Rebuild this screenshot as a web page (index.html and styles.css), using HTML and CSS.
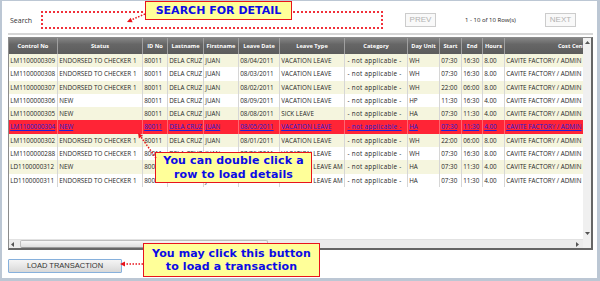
FILE: index.html
```html
<!DOCTYPE html>
<html>
<head>
<meta charset="utf-8">
<link rel="stylesheet" href="styles.css">
</head>
<body>
<div class="frame">
  <div class="toolbar">
    <span class="search-label">Search</span>
    <div class="search-box"></div>
    <button class="pager-btn prev">PREV</button>
    <span class="pager-info">1 - 10 of 10 Row(s)</span>
    <button class="pager-btn next">NEXT</button>
  </div>
  <div class="separator"></div>
  <div class="grid">
    <div class="grid-main">
      <div class="viewport">
        <div class="row head">
          <div class="cell">Control No</div><div class="cell">Status</div><div class="cell">ID No</div><div class="cell">Lastname</div><div class="cell">Firstname</div><div class="cell">Leave Date</div><div class="cell">Leave Type</div><div class="cell">Category</div><div class="cell">Day Unit</div><div class="cell">Start</div><div class="cell">End</div><div class="cell">Hours</div><div class="cell">Cost Center</div>
        </div>
        <div class="row odd">
          <div class="cell">LM1100000309</div><div class="cell">ENDORSED TO CHECKER 1</div><div class="cell">80011</div><div class="cell">DELA CRUZ</div><div class="cell">JUAN</div><div class="cell">08/04/2011</div><div class="cell">VACATION LEAVE</div><div class="cell cat">- not applicable -</div><div class="cell">WH</div><div class="cell">07:30</div><div class="cell">16:30</div><div class="cell">8.00</div><div class="cell">CAVITE FACTORY / ADMIN</div>
        </div>
        <div class="row">
          <div class="cell">LM1100000308</div><div class="cell">ENDORSED TO CHECKER 1</div><div class="cell">80011</div><div class="cell">DELA CRUZ</div><div class="cell">JUAN</div><div class="cell">08/03/2011</div><div class="cell">VACATION LEAVE</div><div class="cell cat">- not applicable -</div><div class="cell">WH</div><div class="cell">07:30</div><div class="cell">16:30</div><div class="cell">8.00</div><div class="cell">CAVITE FACTORY / ADMIN</div>
        </div>
        <div class="row odd">
          <div class="cell">LM1100000307</div><div class="cell">ENDORSED TO CHECKER 1</div><div class="cell">80011</div><div class="cell">DELA CRUZ</div><div class="cell">JUAN</div><div class="cell">08/02/2011</div><div class="cell">VACATION LEAVE</div><div class="cell cat">- not applicable -</div><div class="cell">WH</div><div class="cell">22:00</div><div class="cell">06:00</div><div class="cell">8.00</div><div class="cell">CAVITE FACTORY / ADMIN</div>
        </div>
        <div class="row">
          <div class="cell">LM1100000306</div><div class="cell">NEW</div><div class="cell">80011</div><div class="cell">DELA CRUZ</div><div class="cell">JUAN</div><div class="cell">08/09/2011</div><div class="cell">VACATION LEAVE</div><div class="cell cat">- not applicable -</div><div class="cell">HP</div><div class="cell">11:30</div><div class="cell">16:30</div><div class="cell">4.00</div><div class="cell">CAVITE FACTORY / ADMIN</div>
        </div>
        <div class="row odd">
          <div class="cell">LM1100000305</div><div class="cell">NEW</div><div class="cell">80011</div><div class="cell">DELA CRUZ</div><div class="cell">JUAN</div><div class="cell">08/08/2011</div><div class="cell">SICK LEAVE</div><div class="cell cat">- not applicable -</div><div class="cell">HA</div><div class="cell">07:30</div><div class="cell">11:30</div><div class="cell">4.00</div><div class="cell">CAVITE FACTORY / ADMIN</div>
        </div>
        <div class="row selected">
          <div class="cell">LM1100000304</div><div class="cell">NEW</div><div class="cell">80011</div><div class="cell">DELA CRUZ</div><div class="cell">JUAN</div><div class="cell">08/05/2011</div><div class="cell">VACATION LEAVE</div><div class="cell cat">- not applicable -</div><div class="cell">HA</div><div class="cell">07:30</div><div class="cell">11:30</div><div class="cell">4.00</div><div class="cell">CAVITE FACTORY / ADMIN</div>
        </div>
        <div class="row odd">
          <div class="cell">LM1100000302</div><div class="cell">ENDORSED TO CHECKER 1</div><div class="cell">80011</div><div class="cell">DELA CRUZ</div><div class="cell">JUAN</div><div class="cell">08/01/2011</div><div class="cell">VACATION LEAVE</div><div class="cell cat">- not applicable -</div><div class="cell">WH</div><div class="cell">22:00</div><div class="cell">06:00</div><div class="cell">8.00</div><div class="cell">CAVITE FACTORY / ADMIN</div>
        </div>
        <div class="row">
          <div class="cell">LM1100000288</div><div class="cell">ENDORSED TO CHECKER 1</div><div class="cell">80011</div><div class="cell">DELA CRUZ</div><div class="cell">JUAN</div><div class="cell">07/29/2011</div><div class="cell">VACATION LEAVE</div><div class="cell cat">- not applicable -</div><div class="cell">WH</div><div class="cell">07:30</div><div class="cell">16:30</div><div class="cell">8.00</div><div class="cell">CAVITE FACTORY / ADMIN</div>
        </div>
        <div class="row odd">
          <div class="cell">LD1100000312</div><div class="cell">NEW</div><div class="cell">80011</div><div class="cell">DELA CRUZ</div><div class="cell">JUAN</div><div class="cell">08/10/2011</div><div class="cell">VACATION LEAVE AM</div><div class="cell cat">- not applicable -</div><div class="cell">HA</div><div class="cell">07:30</div><div class="cell">11:30</div><div class="cell">4.00</div><div class="cell">CAVITE FACTORY / ADMIN</div>
        </div>
        <div class="row">
          <div class="cell">LD1100000311</div><div class="cell">ENDORSED TO CHECKER 1</div><div class="cell">80011</div><div class="cell">DELA CRUZ</div><div class="cell">JUAN</div><div class="cell">08/11/2011</div><div class="cell">VACATION LEAVE AM</div><div class="cell cat">- not applicable -</div><div class="cell">HA</div><div class="cell">07:30</div><div class="cell">11:30</div><div class="cell">4.00</div><div class="cell">CAVITE FACTORY / ADMIN</div>
        </div>
      </div>
      <div class="vscroll">
        <svg class="sarrow" width="5" height="3" viewBox="0 0 5 3"><polygon points="2.5,0 5,3 0,3"/></svg>
        <svg class="sarrow" width="5" height="3" viewBox="0 0 5 3"><polygon points="0,0 5,0 2.5,3"/></svg>
      </div>
    </div>
    <div class="grid-foot">
      <div class="hscroll">
        <svg class="sarrow left" width="3" height="5" viewBox="0 0 3 5"><polygon points="0,2.5 3,0 3,5"/></svg>
        <div class="thumb"></div>
        <div class="track"></div>
        <svg class="sarrow right" width="3" height="5" viewBox="0 0 3 5"><polygon points="0,0 3,2.5 0,5"/></svg>
      </div>
      <div class="corner"></div>
    </div>
  </div>
  <div class="actions">
    <button class="load-btn">LOAD TRANSACTION</button>
  </div>
</div>

<div class="callout c1">SEARCH FOR DETAIL</div>
<div class="callout c2"><span>You can double click a</span><span>row to load details</span></div>
<div class="callout c3"><span>You may click this button</span><span>to load a transaction</span></div>

<svg class="arrows" width="600" height="281" viewBox="0 0 600 281">
  <g stroke="#e8141c" stroke-width="1.5" stroke-dasharray="1.5 1.5" fill="none">
    <line x1="145" y1="14" x2="131" y2="20"/>
    <line x1="156" y1="158" x2="141" y2="137"/>
    <line x1="143" y1="264" x2="124" y2="264"/>
  </g>
  <g fill="#e8141c">
    <polygon points="127,22 132.6,22.3 130.6,17.7"/>
    <polygon points="138,133 142.9,135.6 138.9,138.5"/>
    <polygon points="120,264 125,261.5 125,266.5"/>
  </g>
</svg>
</body>
</html>
```

FILE: styles.css
```css
body {
  margin: 0;
  width: 600px;
  height: 281px;
  position: relative;
  overflow: hidden;
  background: #ffffff;
  font-family: "Open Sans", sans-serif;
}

.frame {
  box-sizing: border-box;
  width: 600px;
  height: 281px;
  border-style: solid;
  border-color: #bcc7d4;
  border-width: 1px 3px 3px 2px;
  padding: 10px 4px 0 6px;
}

.toolbar {
  display: flex;
  align-items: center;
  height: 18px;
}

.search-label {
  box-sizing: border-box;
  width: 33px;
  padding-left: 2px;
  font-size: 7px;
  color: #333;
}

.search-box {
  box-sizing: border-box;
  width: 342px;
  height: 18px;
  border: 2px dotted #f0303a;
  background: #fff;
}

.pager-btn {
  box-sizing: border-box;
  width: 31px;
  height: 14px;
  padding: 0;
  margin-left: 22px;
  border: 1px solid #cccccc;
  background: #f9f9f9;
  color: #b2b2b2;
  font-family: "Liberation Sans", sans-serif;
  font-size: 8px;
  line-height: 12px;
}

.pager-info {
  width: 50px;
  margin-left: 29px;
  font-size: 6px;
  color: #222;
  white-space: nowrap;
}

.pager-btn.next {
  margin-left: 30px;
}

.separator {
  height: 2px;
  margin-top: 4px;
  background: #d6d6d6;
}

.grid {
  box-sizing: border-box;
  height: 213px;
  margin-top: 2px;
  border-style: solid;
  border-color: #8c8c8c #666666 #666666 #8c8c8c;
  border-width: 1px 2px 2px 1px;
  display: flex;
  flex-direction: column;
}

.grid-main {
  display: flex;
  flex: 1;
  min-height: 0;
}

.viewport {
  width: 574px;
  overflow: hidden;
  background: #fff;
}

.row {
  display: grid;
  grid-template-columns: 49px 85px 25px 36px 35px 41px 65px 63px 32px 22px 21px 22px 140px;
  width: max-content;
  height: 13.3px;
}

.cell {
  box-sizing: border-box;
  border-right: 1px solid #d6d6d6;
  padding-left: 1.2px;
  font-size: 6.3px;
  line-height: 13.3px;
  color: #262626;
  white-space: nowrap;
  overflow: hidden;
}

.cell.cat {
  padding-left: 2.5px;
  letter-spacing: 0.3px;
}

.row.head {
  height: 16px;
  background: linear-gradient(#858585, #666666 40%, #5c5c5c);
}

.row.head .cell {
  padding-left: 0;
  text-align: center;
  font-size: 5.7px;
  line-height: 16px;
  color: #ffffff;
  font-weight: 700;
  border-right-color: #a0a0a0;
}

.row.odd {
  background: #f5f5de;
}

.row.selected {
  background: #ff2436;
}

.row.selected .cell {
  color: #2020d8;
  text-decoration: underline;
  border-right-color: #ff6670;
}

.vscroll {
  box-sizing: border-box;
  width: 8px;
  padding: 3px 0 4px;
  background: #f0f0f0;
  display: flex;
  flex-direction: column;
  justify-content: space-between;
  align-items: center;
}

.sarrow {
  display: block;
  fill: #555555;
}

.grid-foot {
  display: flex;
  height: 9px;
}

.hscroll {
  box-sizing: border-box;
  width: 574px;
  padding: 0 4px 0 2px;
  background: #ececec;
  border-top: 1px solid #e2e2e2;
  display: flex;
  align-items: center;
}

.hscroll .thumb {
  box-sizing: border-box;
  width: 248px;
  height: 8px;
  margin-left: 6px;
  border: 1px solid #bdbdbd;
  border-bottom-color: #9a9a9a;
  border-radius: 2px;
  background: linear-gradient(#f6f6f6, #dedede);
}

.hscroll .track {
  flex: 1;
}

.corner {
  width: 8px;
  background: #f0f0f0;
}

.actions {
  display: flex;
  margin-top: 9px;
}

.load-btn {
  box-sizing: border-box;
  width: 114px;
  height: 14px;
  padding: 0;
  border: 1px solid #86b0dc;
  border-radius: 1px;
  background: linear-gradient(#f5f5f5, #d8d8d8);
  color: #333;
  font-family: "Liberation Sans", sans-serif;
  font-size: 7.5px;
  line-height: 12px;
}

.callout {
  position: absolute;
  box-sizing: border-box;
  background: #ffff99;
  border: 1px solid #e8141c;
  color: #0b0be6;
  font-family: "DejaVu Sans", sans-serif;
  font-weight: 700;
  font-size: 11px;
  text-align: center;
  display: flex;
  flex-direction: column;
  justify-content: center;
  white-space: nowrap;
}

.c1 {
  left: 145px;
  top: 1px;
  width: 147px;
  height: 19px;
  line-height: 13px;
}

.c2 {
  left: 155px;
  top: 152px;
  width: 157px;
  height: 31px;
  line-height: 14px;
  letter-spacing: 0.15px;
}

.c3 {
  left: 143px;
  top: 243px;
  width: 177px;
  height: 34px;
  line-height: 13px;
  letter-spacing: 0.1px;
}

.arrows {
  position: absolute;
  left: 0;
  top: 0;
  pointer-events: none;
}
```
